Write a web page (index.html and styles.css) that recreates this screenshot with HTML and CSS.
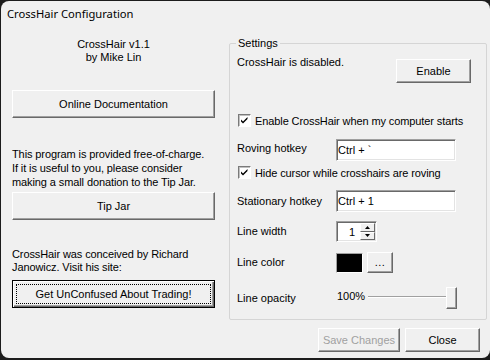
FILE: index.html
```html
<!DOCTYPE html>
<html>
<head>
<meta charset="utf-8">
<link rel="stylesheet" href="styles.css">
</head>
<body>
<div class="win">
  <div class="titlebar">CrossHair Configuration</div>
  <div class="content">
    <div class="left">
      <div class="about">CrossHair v1.1<br>by Mike Lin</div>
      <div class="btn big docs">Online Documentation</div>
      <div class="para p1">This program is provided free-of-charge.<br>If it is useful to you, please consider<br>making a small donation to the Tip Jar.</div>
      <div class="btn big tip">Tip Jar</div>
      <div class="para p2">CrossHair was conceived by Richard<br>Janowicz. Visit his site:</div>
      <div class="btn big default site"><span class="focus"></span>Get UnConfused About Trading!</div>
    </div>
    <div class="right">
      <div class="group">
        <span class="legend">Settings</span>
        <div class="row status">
          <span class="status-text">CrossHair is disabled.</span>
          <div class="btn enable">Enable</div>
        </div>
        <div class="row check c1">
          <span class="cb"><svg width="13" height="13" viewBox="0 0 13 13"><path d="M3 5.5 L5 7.5 L9.5 3 L9.5 5 L5 9.5 L3 7.5 Z" fill="#000"/></svg></span>
          <span>Enable CrossHair when my computer starts</span>
        </div>
        <div class="row field roving">
          <span class="lbl">Roving hotkey</span>
          <div class="edit">Ctrl + `</div>
        </div>
        <div class="row check c2">
          <span class="cb"><svg width="13" height="13" viewBox="0 0 13 13"><path d="M3 5.5 L5 7.5 L9.5 3 L9.5 5 L5 9.5 L3 7.5 Z" fill="#000"/></svg></span>
          <span>Hide cursor while crosshairs are roving</span>
        </div>
        <div class="row field stationary">
          <span class="lbl">Stationary hotkey</span>
          <div class="edit">Ctrl + 1</div>
        </div>
        <div class="row field width">
          <span class="lbl">Line width</span>
          <div class="spin">
            <span class="spin-val">1</span>
            <div class="spin-btns">
              <span class="sb"><svg width="5" height="3" viewBox="0 0 5 3"><path d="M2.5 0 L5 3 L0 3 Z" fill="#000"/></svg></span>
              <span class="sb"><svg width="5" height="3" viewBox="0 0 5 3"><path d="M0 0 L5 0 L2.5 3 Z" fill="#000"/></svg></span>
            </div>
          </div>
        </div>
        <div class="row field color">
          <span class="lbl">Line color</span>
          <span class="swatch"></span>
          <div class="btn dots">...</div>
        </div>
        <div class="row field opacity">
          <span class="lbl">Line opacity</span>
          <span class="pct">100%</span>
          <div class="slider">
            <span class="track"></span>
            <span class="thumb"></span>
          </div>
        </div>
      </div>
      <div class="actions">
        <div class="btn act disabled">Save Changes</div>
        <div class="btn act close">Close</div>
      </div>
    </div>
  </div>
</div>
</body>
</html>
```
FILE: styles.css
```css
html, body {
  margin: 0;
  padding: 0;
}
body {
  background: #1c1c1c;
  width: 490px;
  height: 360px;
  overflow: hidden;
  font-family: "Liberation Sans", Arial, sans-serif;
  font-size: 11px;
  color: #000;
}
.win {
  margin: 1px 0 0 1px;
  width: 489px;
  height: 357px;
  background: #f0f0f0;
  border-radius: 8px;
  overflow: hidden;
  display: flex;
  flex-direction: column;
}
.titlebar {
  height: 30px;
  flex: none;
  box-sizing: border-box;
  padding: 5px 0 0 6px;
  font-family: "Noto Sans", "Open Sans", sans-serif;
  font-size: 11.2px;
  line-height: 16px;
  color: #000;
}
.content {
  display: flex;
  padding-left: 11px;
}
.left {
  width: 203px;
  display: flex;
  flex-direction: column;
}
.about {
  margin-top: 7px;
  text-align: center;
  line-height: 13px;
}
.btn {
  box-sizing: border-box;
  background: #f0f0f0;
  border: 1px solid;
  border-color: #fff #696969 #696969 #fff;
  box-shadow: inset -1px -1px #a0a0a0;
  display: flex;
  align-items: center;
  justify-content: center;
  position: relative;
}
.btn.big {
  height: 28px;
}
.docs {
  margin-top: 26px;
}
.para {
  line-height: 14px;
  letter-spacing: -0.1px;
}
.p1 {
  margin-top: 29px;
}
.tip {
  margin-top: 3px;
}
.p2 {
  margin-top: 28px;
  line-height: 13px;
}
.site {
  margin-top: 6px;
}
.btn.default {
  border: 1px solid #000;
  box-shadow: inset 1px 1px #fff, inset -1px -1px #696969, inset -2px -2px #a0a0a0;
}
.focus {
  position: absolute;
  left: 3px;
  top: 3px;
  right: 3px;
  bottom: 3px;
  border: 1px dotted #000;
}
.right {
  margin-left: 14px;
  width: 258px;
  display: flex;
  flex-direction: column;
}
.group {
  margin-top: 12px;
  height: 277px;
  box-sizing: border-box;
  border: 1px solid #d5d5d5;
  border-radius: 2px;
  position: relative;
  padding: 0 0 0 7px;
}
.legend {
  position: absolute;
  left: 6px;
  top: -8px;
  padding: 0 2px;
  background: #f0f0f0;
  line-height: 14px;
}
.row {
  display: flex;
  align-items: flex-start;
}
.status {
  padding-top: 12px;
  height: 39px;
  box-sizing: border-box;
}
.status-text {
  line-height: 13px;
}
.enable {
  margin-left: auto;
  margin-right: 15px;
  margin-top: 3px;
  width: 75px;
  height: 24px;
}
.check {
  align-items: center;
  height: 13px;
  letter-spacing: -0.1px;
}
.c1 {
  margin-top: 31px;
}
.c2 {
  margin-top: 5px;
}
.cb {
  width: 13px;
  height: 13px;
  box-sizing: border-box;
  margin-left: 1px;
  margin-right: 4px;
  background: #fff;
  border: 1px solid;
  border-color: #7a7a7a #fff #fff #7a7a7a;
  box-shadow: inset 1px 1px #c0c0c0;
  position: relative;
  display: block;
}
.cb svg {
  position: absolute;
  left: -1px;
  top: -1px;
}
.lbl {
  width: 99px;
  flex: none;
  line-height: 13px;
}
.field {
  align-items: center;
}
.roving {
  margin-top: 12px;
}
.roving .lbl {
  margin-top: -4px;
}
.stationary {
  margin-top: 11px;
}
.edit {
  width: 120px;
  height: 22px;
  box-sizing: border-box;
  background: #fff;
  border: 1px solid;
  border-color: #a0a0a0 #fff #fff #a0a0a0;
  box-shadow: inset 1px 1px #696969, inset -1px -1px #e3e3e3;
  padding: 0 1px;
  line-height: 20px;
  font-size: 11px;
}
.width {
  margin-top: 9px;
}
.spin {
  width: 41px;
  height: 21px;
  box-sizing: border-box;
  background: #fff;
  border: 1px solid;
  border-color: #a0a0a0 #fff #fff #a0a0a0;
  box-shadow: inset 1px 1px #696969, inset -1px -1px #e3e3e3;
  display: flex;
  padding: 1px 1px 1px 2px;
}
.spin-val {
  flex: 1;
  text-align: right;
  padding-right: 5px;
  line-height: 19px;
  font-size: 11px;
}
.spin-btns {
  width: 15px;
  display: flex;
  flex-direction: column;
}
.sb {
  flex: 1;
  box-sizing: border-box;
  background: #f0f0f0;
  border: 1px solid;
  border-color: #fff #696969 #696969 #fff;
  display: flex;
  align-items: center;
  justify-content: center;
}
.color {
  margin-top: 10px;
}
.swatch {
  width: 27px;
  height: 20px;
  box-sizing: border-box;
  background: #000;
  border: 1px solid;
  border-color: #a0a0a0 #fff #fff #a0a0a0;
}
.dots {
  margin-left: 4px;
  width: 26px;
  height: 21px;
  align-items: flex-end;
  padding-bottom: 4px;
  letter-spacing: 0.5px;
  line-height: 11px;
}
.opacity {
  margin-top: 14px;
  height: 22px;
}
.pct {
  width: 31px;
  flex: none;
  margin-left: 1px;
  margin-top: -4px;
}
.slider {
  position: relative;
  width: 90px;
  height: 22px;
}
.track {
  position: absolute;
  left: 0;
  top: 9px;
  width: 86px;
  height: 2px;
  border-top: 1px solid #a0a0a0;
  border-bottom: 1px solid #fff;
  background: #696969;
  box-sizing: border-box;
}
.thumb {
  position: absolute;
  left: 78px;
  top: 0;
  width: 11px;
  height: 22px;
  box-sizing: border-box;
  background: #f0f0f0;
  border: 1px solid;
  border-color: #fff #696969 #696969 #fff;
  box-shadow: inset -1px -1px #a0a0a0;
}
.actions {
  display: flex;
  justify-content: flex-end;
  gap: 5px;
  margin-top: 8px;
  padding-right: 7px;
}
.act {
  height: 24px;
}
.disabled {
  width: 82px;
  color: #a0a0a0;
}
.close {
  width: 75px;
}
```
